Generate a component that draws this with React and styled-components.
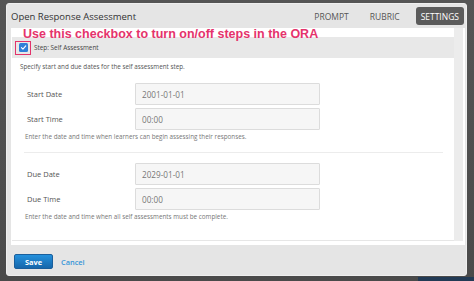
import React from 'react'
import styled, { createGlobalStyle } from 'styled-components'

const Global = createGlobalStyle`
  html, body {
    margin: 0;
    padding: 0;
    background: #4b4b4b;
  }
  * {
    box-sizing: border-box;
  }
`

const Screen = styled.div`
  position: relative;
  width: 474px;
  height: 281px;
  overflow: hidden;
  background:
    linear-gradient(#223a55, #223a55) no-repeat 418px 277px / 56px 4px,
    linear-gradient(180deg, #555 0%, #4a4a4a 100%);
  font-family: 'Open Sans', 'Liberation Sans', sans-serif;
`

const Modal = styled.div`
  position: relative;
  margin: 3px 0 0 6px;
  width: 461px;
  height: 273px;
  display: flex;
  flex-direction: column;
  background: #e5e5e5;
  border: 1px solid #efefef;
  border-radius: 3px;
`

const Header = styled.div`
  height: 24px;
  display: flex;
  align-items: center;
  padding: 0 2px 0 4px;
`

const Title = styled.div`
  flex: 1;
  font-size: 9.5px;
  color: #333;
`

const Tabs = styled.div`
  display: flex;
  align-items: center;
  gap: 11px;
`

const Tab = styled.div`
  height: 18px;
  display: flex;
  align-items: center;
  padding: 0 5px;
  font-size: 8.5px;
  text-transform: uppercase;
  border-radius: 3px;
  color: ${(p) => (p.$active ? '#fff' : '#555')};
  background: ${(p) => (p.$active ? '#5b5b5b' : 'transparent')};
`

const Panel = styled.div`
  height: 217px;
  margin: 0 1px 0 4px;
  padding: 0 2px 4px 1px;
  background: #fff;
  display: flex;
`

const Content = styled.div`
  flex: 1;
  padding-top: 9px;
  border-bottom: 1px solid #e6e6e6;
`

const ScrollTrack = styled.div`
  width: 9px;
  background: #ececec;
`

const StepBar = styled.div`
  height: 21px;
  display: flex;
  align-items: center;
  background: #e8e8e8;
  padding-left: 3px;
  font-size: 6.4px;
  color: #444;
`

const Highlight = styled.div`
  width: 16px;
  height: 14px;
  display: flex;
  align-items: center;
  justify-content: center;
  border: 1.5px solid #e2336b;
  margin-right: 3px;
`

const Check = styled.div`
  width: 9px;
  height: 9px;
  border-radius: 1.5px;
  background: #2f80d8;
  display: flex;
  align-items: center;
  justify-content: center;
`

const Body = styled.div`
  padding: 4px 11px 0 8px;
`

const Description = styled.div`
  font-size: 6.3px;
  line-height: 9px;
  color: #555;
  margin-bottom: 12px;
`

const Fields = styled.div`
  margin-left: 4px;
`

const Row = styled.div`
  display: flex;
  align-items: center;
  margin-bottom: 3px;
`

const Label = styled.div`
  width: 111px;
  padding-left: 3px;
  font-size: 7.5px;
  font-weight: 500;
  color: #555;
`

const Input = styled.div`
  width: 185px;
  height: 22px;
  display: flex;
  align-items: center;
  padding-left: 6px;
  background: #f6f6f6;
  border: 1px solid #dcdcdc;
  border-radius: 1px;
  font-size: 8.2px;
  color: #777;
`

const Help = styled.div`
  padding-left: 1px;
  font-size: 6.3px;
  line-height: 8px;
  color: #777;
  margin-top: 2px;
`

const Divider = styled.div`
  height: 1px;
  background: #ececec;
  margin: 11px 0 10px;
`

const Footer = styled.div`
  flex: 1;
  display: flex;
  align-items: flex-start;
  gap: 8px;
  padding: 9px 0 0 7px;
`

const SaveButton = styled.div`
  width: 39px;
  height: 15px;
  display: flex;
  align-items: center;
  justify-content: center;
  background: linear-gradient(180deg, #2490dc 0%, #1667ab 100%);
  border: 1px solid #1a5f9c;
  border-radius: 2px;
  color: #fff;
  font-size: 7.4px;
  font-weight: 700;
`

const CancelLink = styled.div`
  height: 15px;
  display: flex;
  align-items: center;
  font-size: 7.4px;
  font-weight: 600;
  color: #3796d8;
`

const Annotation = styled.div`
  position: absolute;
  left: 16px;
  top: 23px;
  font-family: 'Liberation Sans', Arial, sans-serif;
  font-weight: 700;
  font-size: 12.5px;
  line-height: 14px;
  color: #e5336c;
  white-space: nowrap;
`

const CheckMark = () => (
  <svg width="7" height="7" viewBox="0 0 10 10">
    <path d="M2 5.2 L4.2 7.4 L8.2 2.6" fill="none" stroke="#fff" strokeWidth="1.6" strokeLinecap="round" strokeLinejoin="round" />
  </svg>
)

const Field = ({ label, value }) => (
  <Row>
    <Label>{label}</Label>
    <Input>{value}</Input>
  </Row>
)

export default function App() {
  return (
    <Screen>
      <Global />
      <Modal>
        <Header>
          <Title>Open Response Assessment</Title>
          <Tabs>
            <Tab>Prompt</Tab>
            <Tab>Rubric</Tab>
            <Tab $active>Settings</Tab>
          </Tabs>
        </Header>
        <Panel>
          <Content>
            <StepBar>
              <Highlight>
                <Check>
                  <CheckMark />
                </Check>
              </Highlight>
              Step: Self Assessment
            </StepBar>
            <Body>
              <Description>Specify start and due dates for the self assessment step.</Description>
              <Fields>
                <Field label="Start Date" value="2001-01-01" />
                <Field label="Start Time" value="00:00" />
                <Help>Enter the date and time when learners can begin assessing their responses.</Help>
                <Divider />
                <Field label="Due Date" value="2029-01-01" />
                <Field label="Due Time" value="00:00" />
                <Help>Enter the date and time when all self assessments must be complete.</Help>
              </Fields>
            </Body>
          </Content>
          <ScrollTrack />
        </Panel>
        <Footer>
          <SaveButton>Save</SaveButton>
          <CancelLink>Cancel</CancelLink>
        </Footer>
        <Annotation>Use this checkbox to turn on/off steps in the ORA</Annotation>
      </Modal>
    </Screen>
  )
}
